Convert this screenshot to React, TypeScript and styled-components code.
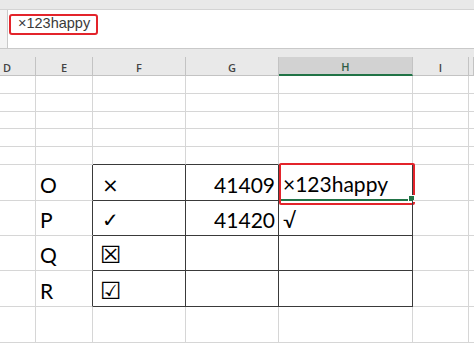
import styled, { createGlobalStyle } from "styled-components";

const GlobalStyle = createGlobalStyle`
  html, body {
    margin: 0;
    padding: 0;
    background: #ffffff;
  }
  body {
    width: 474px;
    height: 343px;
    overflow: hidden;
    font-family: "Lato", "DejaVu Sans", sans-serif;
  }
`;

const COLS = [36, 57, 93, 93, 134, 56, 5];
const ROWS = [18, 18, 17, 18, 18, 36, 35, 35, 36, 36];
const HEADERS = ["D", "E", "F", "G", "H", "I", ""];

type CellData = { text: string; align?: "left" | "right"; symbol?: number };

// row index -> col index -> content (symbol = font size of the glyph)
const CONTENT: Record<number, Record<number, CellData>> = {
  5: {
    1: { text: "O" },
    2: { text: "×", symbol: 20 },
    3: { text: "41409", align: "right" },
    4: { text: "×123happy" },
  },
  6: {
    1: { text: "P" },
    2: { text: "✓", symbol: 20 },
    3: { text: "41420", align: "right" },
    4: { text: "√" },
  },
  7: { 1: { text: "Q" }, 2: { text: "☒", symbol: 24 } },
  8: { 1: { text: "R" }, 2: { text: "☑", symbol: 24 } },
};

const inTable = (r: number, c: number) => r >= 5 && r <= 8 && c >= 2 && c <= 4;

function App() {
  return (
    <>
      <GlobalStyle />
      <Page>
        <FormulaBar>
          <NameStub />
          <FormulaField>
            <FormulaText>×123happy</FormulaText>
          </FormulaField>
        </FormulaBar>
        <Sheet>
          {HEADERS.map((h, c) => (
            <HeaderCell key={h + c} $active={c === 4} $left={c === 0}>
              {h}
            </HeaderCell>
          ))}
          {ROWS.map((height, r) =>
            COLS.map((_, c) => {
              const data = CONTENT[r]?.[c];
              const darkRight = inTable(r, c) || (c === 1 && r >= 5 && r <= 8);
              const darkBottom = inTable(r, c) || (r === 4 && c >= 2 && c <= 4);
              const selected = r === 5 && c === 4;
              return (
                <Cell
                  key={`${r}-${c}`}
                  style={{ height }}
                  $darkRight={darkRight}
                  $darkBottom={darkBottom}
                  $selected={selected}
                  $align={data?.align || "left"}
                >
                  {data && <CellText $symbol={data.symbol}>{data.text}</CellText>}
                  {selected && (
                    <>
                      <RedFrame />
                      <FillHandle />
                    </>
                  )}
                </Cell>
              );
            })
          )}
        </Sheet>
      </Page>
    </>
  );
}

const Page = styled.div`
  display: flex;
  flex-direction: column;
  width: 474px;
  height: 343px;
  overflow: hidden;
  background: #e9e9e9;
`;

const FormulaBar = styled.div`
  display: flex;
  height: 40px;
  margin-top: 9px;
  border-top: 1px solid #d4d4d4;
  border-bottom: 1px solid #c9c9c9;
  box-sizing: border-box;
`;

const NameStub = styled.div`
  width: 8px;
  background: #f3f3f3;
  border-right: 1px solid #c9c9c9;
  box-sizing: border-box;
`;

const FormulaField = styled.div`
  flex: 1;
  background: #ffffff;
  padding: 2px 0 0 1px;
`;

const FormulaText = styled.span`
  display: inline-block;
  border: 2.5px solid #e3242b;
  border-radius: 3px;
  padding: 0 6px 0 7px;
  height: 21px;
  box-sizing: border-box;
  font-family: "Liberation Sans", Arial, sans-serif;
  font-size: 14.5px;
  line-height: 15px;
  color: #3a3a3a;
`;

const Sheet = styled.div`
  display: grid;
  grid-template-columns: ${COLS.map((w) => `${w}px`).join(" ")};
  margin-top: 8px;
  background: #ffffff;
  flex: 1;
  align-content: start;
`;

const HeaderCell = styled.div<{ $active?: boolean; $left?: boolean }>`
  height: 19px;
  box-sizing: border-box;
  background: ${({ $active }) => ($active ? "#d2d2d2" : "#e9e9e9")};
  border-right: 1px solid #c3c3c3;
  border-bottom: ${({ $active }) => ($active ? "2px solid #217346" : "1px solid #c3c3c3")};
  display: flex;
  align-items: center;
  justify-content: ${({ $left }) => ($left ? "flex-start" : "center")};
  padding-left: ${({ $left }) => ($left ? "3px" : "0")};
  padding-top: 2px;
  font-family: "Open Sans", "DejaVu Sans", sans-serif;
  font-weight: 600;
  font-size: 11px;
  color: ${({ $active }) => ($active ? "#2f5d45" : "#444444")};
`;

const Cell = styled.div<{
  $darkRight?: boolean;
  $darkBottom?: boolean;
  $selected?: boolean;
  $align: "left" | "right";
}>`
  position: relative;
  box-sizing: border-box;
  border-right: 1px solid ${({ $darkRight }) => ($darkRight ? "#3a3a3a" : "#d6d6d6")};
  border-bottom: ${({ $darkBottom, $selected }) =>
    $selected ? "2px solid #217346" : `1px solid ${$darkBottom ? "#3a3a3a" : "#d6d6d6"}`};
  display: flex;
  align-items: flex-end;
  justify-content: ${({ $align }) => ($align === "right" ? "flex-end" : "flex-start")};
  padding: 0 3px 3px 4px;
  overflow: visible;
`;

const CellText = styled.span<{ $symbol?: number }>`
  font-family: ${({ $symbol }) => ($symbol ? '"DejaVu Sans", sans-serif' : '"Lato", sans-serif')};
  font-size: ${({ $symbol }) => ($symbol ? `${$symbol}px` : "21px")};
  line-height: 24px;
  color: #000000;
  white-space: nowrap;
  padding-left: ${({ $symbol }) => ($symbol ? "5px" : "0")};
  margin-left: ${({ $symbol }) => ($symbol && $symbol > 20 ? "-2px" : "0")};
`;

const RedFrame = styled.div`
  position: absolute;
  top: -2px;
  left: 0;
  right: -3px;
  bottom: -6px;
  border: 2.5px solid #e3242b;
  border-radius: 2px;
  pointer-events: none;
`;

const FillHandle = styled.div`
  position: absolute;
  right: -3px;
  bottom: -3px;
  width: 5px;
  height: 5px;
  background: #217346;
  border: 1px solid #ffffff;
`;

export default App;
